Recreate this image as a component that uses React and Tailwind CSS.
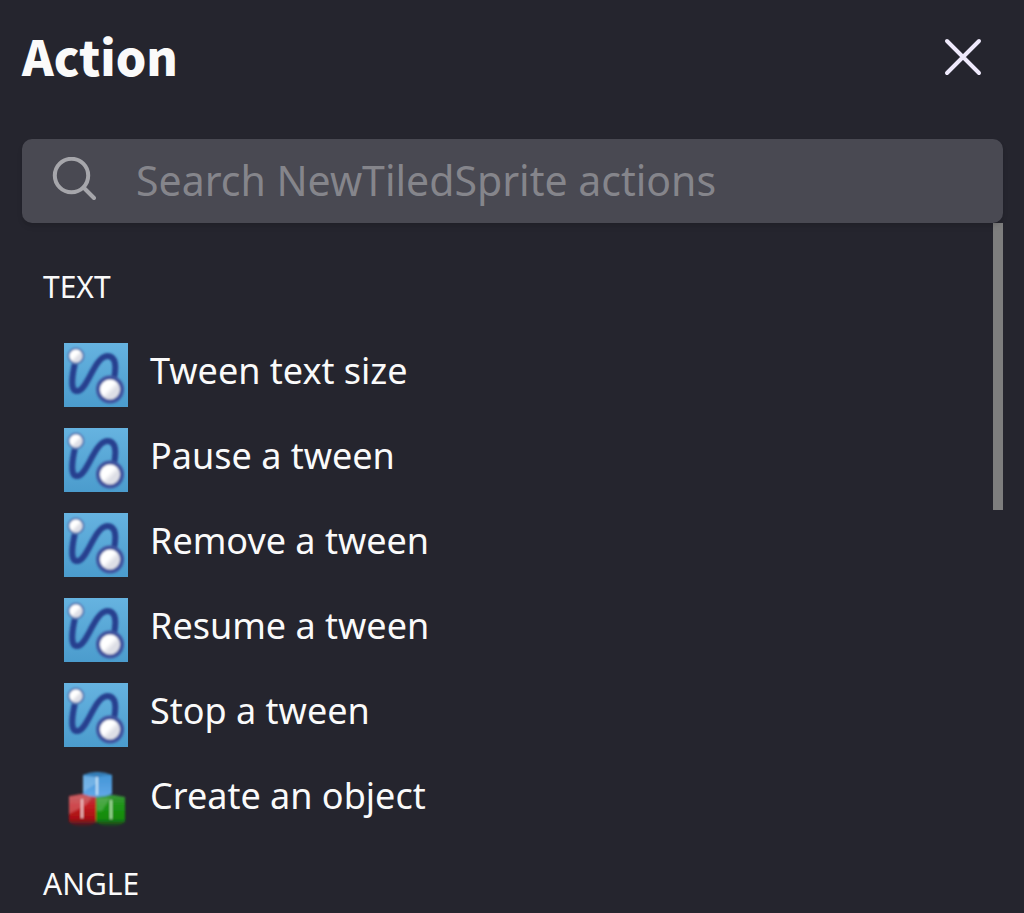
import React, { useState } from 'react';

const tweenActions = [
  'Tween text size',
  'Pause a tween',
  'Remove a tween',
  'Resume a tween',
  'Stop a tween',
];

const sections = [
  {
    title: 'TEXT',
    items: [
      ...tweenActions.map((label) => ({ label, icon: 'tween' })),
      { label: 'Create an object', icon: 'create' },
    ],
  },
  { title: 'ANGLE', items: [] },
];

const CloseIcon = () => (
  <svg viewBox="0 0 40 40" className="w-10 h-10" fill="none" stroke="#efeafc" strokeWidth="4" strokeLinecap="round" aria-hidden="true">
    <path d="M4 4L36 36M36 4L4 36" />
  </svg>
);

const SearchIcon = () => (
  <svg viewBox="0 0 44 44" className="w-11 h-11 shrink-0" fill="none" stroke="#a6a6ab" strokeWidth="4" aria-hidden="true">
    <circle cx="19.5" cy="18.5" r="16.7" />
    <path d="M32 31L42 41" strokeLinecap="round" />
  </svg>
);

const TweenIcon = () => (
  <svg viewBox="0 0 64 64" className="w-16 h-16 shrink-0" aria-hidden="true">
    <defs>
      <linearGradient id="tween-bg" x1="0" y1="0" x2="0" y2="1">
        <stop offset="0" stopColor="#66b3e0" />
        <stop offset="1" stopColor="#4b9ccd" />
      </linearGradient>
      <linearGradient id="tween-ball" x1="0" y1="0" x2="1" y2="1">
        <stop offset="0.45" stopColor="#ffffff" />
        <stop offset="0.6" stopColor="#dedfe6" />
      </linearGradient>
      <filter id="tween-soft" x="-10%" y="-10%" width="120%" height="120%">
        <feGaussianBlur stdDeviation="0.8" />
      </filter>
    </defs>
    <rect width="64" height="64" fill="url(#tween-bg)" />
    <g filter="url(#tween-soft)">
      <path
        d="M11 20C8 33 6 48 13 48C23 49 30 14 43 13C53 13 52 25 50 36"
        fill="none"
        stroke="#25418f"
        strokeWidth="6"
        strokeLinecap="round"
      />
      <circle cx="12" cy="13" r="7.5" fill="url(#tween-ball)" stroke="#5579b4" strokeWidth="2" />
      <circle cx="46" cy="46.5" r="12" fill="url(#tween-ball)" stroke="#3f559f" strokeWidth="4" />
    </g>
  </svg>
);

const CreateIcon = () => (
  <svg viewBox="0 0 64 64" className="w-16 h-16 shrink-0" aria-hidden="true">
    <defs>
      <linearGradient id="cube-blue" x1="0" y1="0" x2="0" y2="1">
        <stop offset="0" stopColor="#3f93d4" />
        <stop offset="1" stopColor="#62a8e8" />
      </linearGradient>
      <linearGradient id="cube-red" x1="0" y1="0" x2="0" y2="1">
        <stop offset="0" stopColor="#b8464c" />
        <stop offset="0.35" stopColor="#c31d22" />
        <stop offset="0.75" stopColor="#a80f12" />
        <stop offset="1" stopColor="#a80f12" stopOpacity="0" />
      </linearGradient>
      <linearGradient id="cube-green" x1="0" y1="0" x2="0" y2="1">
        <stop offset="0" stopColor="#3a963a" />
        <stop offset="0.35" stopColor="#1d9416" />
        <stop offset="0.75" stopColor="#128a0a" />
        <stop offset="1" stopColor="#128a0a" stopOpacity="0" />
      </linearGradient>
      <filter id="cube-soft" x="-10%" y="-10%" width="120%" height="120%">
        <feGaussianBlur stdDeviation="1" />
      </filter>
    </defs>
    <g filter="url(#cube-soft)">
      <path d="M5 28L16 26H32V54Q26 59 19 59Q11 59 5 54Z" fill="url(#cube-red)" />
      <path d="M32 27H50L61 29V54Q54 59 47 59Q39 59 32 54Z" fill="url(#cube-green)" />
      <path d="M5 29L17 27L28 29L22 37L5 46Z" fill="#e4a0a4" opacity="0.35" />
      <path d="M33 30H46L38 43H33Z" fill="#8ccc88" opacity="0.35" />
      <path d="M19 7Q33 1 48 7V26Q33 32 19 26Z" fill="url(#cube-blue)" />
      <path d="M19 8L33 9V15L19 24Z" fill="#a8d2f2" opacity="0.4" />
      <path d="M20 7Q33 2 47 7L33 9Z" fill="#347eb8" />
      <path d="M33 9V27" stroke="#c5e4f8" strokeWidth="2" />
      <path d="M18 31V50" stroke="#eec0c2" strokeWidth="2" />
      <path d="M47 32V51" stroke="#a8e0a0" strokeWidth="2" />
    </g>
  </svg>
);

const ActionRow = ({ item }) => (
  <li>
    <button type="button" className="flex w-full items-center gap-[22px] text-left">
      {item.icon === 'tween' ? <TweenIcon /> : <CreateIcon />}
      <span className="pb-2 text-[36px] leading-[48px]">{item.label}</span>
    </button>
  </li>
);

export default function App() {
  const [query, setQuery] = useState('');

  return (
    <main className="flex h-screen flex-col overflow-hidden bg-[#25252e] pr-[21px] pl-[22px] font-['Noto_Sans',sans-serif] text-[#fafafa]">
      <header className="flex shrink-0 items-center justify-between pt-[25px] pr-5 pb-[50px]">
        <h1 className="pb-1 font-['Noto_Sans_CJK_JP','Noto_Sans',sans-serif] text-[48px] leading-[60px] font-black">Action</h1>
        <button type="button" aria-label="Close">
          <CloseIcon />
        </button>
      </header>

      <label className="z-10 flex h-[84px] shrink-0 items-center gap-10 rounded-[10px] bg-[#494952] px-[30px] pb-1 shadow-md">
        <SearchIcon />
        <input
          type="text"
          aria-label="Search actions"
          value={query}
          onChange={(e) => setQuery(e.target.value)}
          placeholder="Search NewTiledSprite actions"
          className="min-w-0 flex-1 bg-transparent pt-0.5 text-[41px] leading-[56px] outline-none placeholder:text-[#85858b]"
        />
      </label>

      <div className="relative min-h-0 flex-1">
        <div className="h-full overflow-hidden px-[21px] pt-11">
          {sections.map((section) => (
            <section key={section.title}>
              <h2 className="text-[30px] leading-[40px]">{section.title}</h2>
              <ul className="flex flex-col gap-[21px] px-[21px] pt-9 pb-8">
                {section.items.map((item) => (
                  <ActionRow key={item.label} item={item} />
                ))}
              </ul>
            </section>
          ))}
        </div>
        {/* Scrollbar thumb */}
        <div className="absolute top-0 right-0 h-[287px] w-[10px] bg-[#7e7e7e]" />
      </div>
    </main>
  );
}
